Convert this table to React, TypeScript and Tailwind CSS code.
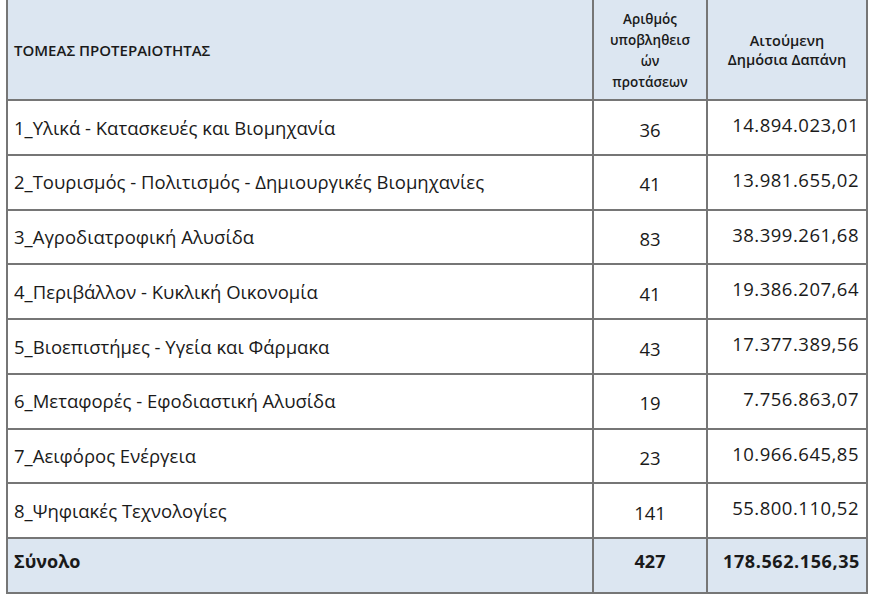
const rows: [string, string, string][] = [
  ["1_Υλικά - Κατασκευές και Βιομηχανία", "36", "14.894.023,01"],
  ["2_Τουρισμός - Πολιτισμός - Δημιουργικές Βιομηχανίες", "41", "13.981.655,02"],
  ["3_Αγροδιατροφική Αλυσίδα", "83", "38.399.261,68"],
  ["4_Περιβάλλον - Κυκλική Οικονομία", "41", "19.386.207,64"],
  ["5_Βιοεπιστήμες - Υγεία και Φάρμακα", "43", "17.377.389,56"],
  ["6_Μεταφορές - Εφοδιαστική Αλυσίδα", "19", "7.756.863,07"],
  ["7_Αειφόρος Ενέργεια", "23", "10.966.645,85"],
  ["8_Ψηφιακές Τεχνολογίες", "141", "55.800.110,52"],
];

export default function App() {
  return (
    <main className="h-[601px] w-[880px] bg-white pl-[6px] font-['Open_Sans',sans-serif] text-[#1a1a1a]">
      <div className="grid w-[862px] grid-cols-[586px_114px_158px] border-x-2 border-b-2 border-[#767676]">
        <div className="flex h-[101px] items-center border-b-2 border-r-2 border-[#767676] bg-[#dce6f1] pl-[6px] pt-[2px] text-[15px] font-semibold">
          ΤΟΜΕΑΣ ΠΡΟΤΕΡΑΙΟΤΗΤΑΣ
        </div>
        <div className="flex h-[101px] items-center justify-center border-b-2 border-r-2 border-[#767676] bg-[#dce6f1] pt-[2px] text-center text-[13.5px] font-semibold leading-[21px]">
          Αριθμός
          <br />
          υποβληθεισ
          <br />
          ών
          <br />
          προτάσεων
        </div>
        <div className="flex h-[101px] items-center justify-center border-b-2 border-[#767676] bg-[#dce6f1] text-center text-[14.5px] font-semibold leading-[19px]">
          Αιτούμενη
          <br />
          Δημόσια Δαπάνη
        </div>
        {rows.map(([name, count, amount]) => (
          <Row key={name} name={name} count={count} amount={amount} />
        ))}
        <div className="flex h-[53px] items-center border-r-2 border-[#767676] bg-[#dce6f1] pb-[8px] pl-[6px] text-[18px] font-bold">
          Σύνολο
        </div>
        <div className="flex h-[53px] items-center justify-center border-r-2 border-[#767676] bg-[#dce6f1] pb-[8px] text-[18px] font-bold">
          427
        </div>
        <div className="flex h-[53px] items-center justify-end bg-[#dce6f1] pb-[8px] pr-[6px] text-[18px] font-bold tracking-[0.6px]">
          178.562.156,35
        </div>
      </div>
    </main>
  );
}

function Row({ name, count, amount }: { name: string; count: string; amount: string }) {
  return (
    <>
      <div className="flex h-[54.75px] items-center border-b-2 border-r-2 border-[#767676] pl-[6px] text-[18.5px]">
        {name}
      </div>
      <div className="flex h-[54.75px] items-center justify-center border-b-2 border-r-2 border-[#767676] pt-[4px] text-[18.5px]">
        {count}
      </div>
      <div className="flex h-[54.75px] items-start justify-end border-b-2 border-[#767676] pr-[7px] pt-[10px] text-[18.5px] tracking-[0.5px]">
        {amount}
      </div>
    </>
  );
}
